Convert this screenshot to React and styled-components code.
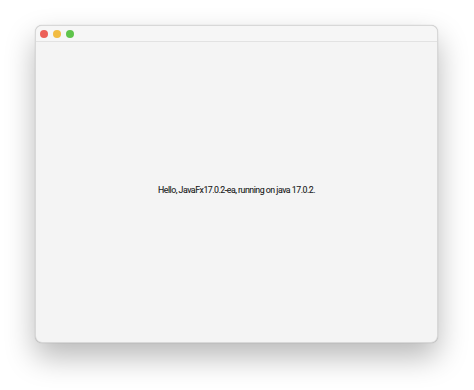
import React from 'react';
import styled, { createGlobalStyle } from 'styled-components';

const GlobalStyle = createGlobalStyle`
    html, body {
        margin: 0;
        padding: 0;
        background: #ffffff;
    }
    body {
        font-family: Inter, "Noto Sans", sans-serif;
    }
`;

const Stage = styled.div`
    width: 474px;
    height: 390px;
    padding: 25px 36px 47px 35px;
    box-sizing: border-box;
`;

const Window = styled.div`
    display: flex;
    flex-direction: column;
    height: 100%;
    border-radius: 7px;
    background-color: #f4f4f4;
    border: 1px solid #d8d8d8;
    box-sizing: border-box;
    overflow: hidden;
    box-shadow: 0 14px 30px rgba(0, 0, 0, 0.28), 0 0 1px rgba(0, 0, 0, 0.3);
`;

const TitleBar = styled.div`
    display: flex;
    align-items: center;
    gap: 5px;
    height: 15px;
    padding: 0 0 0 4px;
    background-color: #f6f6f6;
    border-bottom: 1px solid #e2e2e2;
`;

const Light = styled.span`
    width: 8px;
    height: 8px;
    border-radius: 50%;
    background-color: ${(p) => p.color};
`;

const Content = styled.div`
    flex: 1;
    display: flex;
    align-items: center;
    justify-content: center;
    padding-bottom: 4px;
`;

const Message = styled.p`
    margin: 0;
    font-family: Roboto, Inter, sans-serif;
    font-size: 8.8px;
    color: #161616;
    letter-spacing: -0.5px;
    -webkit-text-stroke: 0.08px #161616;
`;

const App = () => {
    return (
        <>
            <GlobalStyle />
            <Stage>
                <Window>
                    <TitleBar>
                        <Light color="#ec5f57" />
                        <Light color="#f2bc42" />
                        <Light color="#5fc44b" />
                    </TitleBar>
                    <Content>
                        <Message>Hello, JavaFx17.0.2-ea, running on java 17.0.2.</Message>
                    </Content>
                </Window>
            </Stage>
        </>
    );
};

export default App;
